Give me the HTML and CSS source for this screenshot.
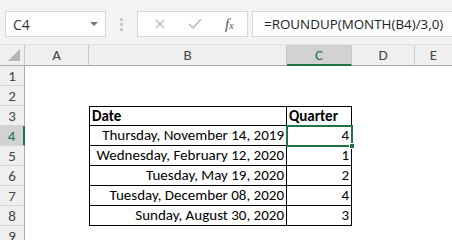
FILE: index.html
```html
<!DOCTYPE html>
<html>
<head>
<meta charset="utf-8">
<link rel="stylesheet" href="styles.css">
</head>
<body>
<div class="topbar">
  <div class="namebox"><span class="name">C4</span><span class="caret"></span></div>
  <div class="dots"><i></i><i></i><i></i></div>
  <div class="fxbox">
    <svg class="ic" width="14" height="14" viewBox="0 0 14 14"><path d="M3 3 L11 11 M11 3 L3 11" stroke="#b8b8b8" stroke-width="1.4" fill="none"/></svg>
    <svg class="ic" width="16" height="14" viewBox="0 0 16 14"><path d="M2 7 L6 11 L14 2" stroke="#b8b8b8" stroke-width="1.4" fill="none"/></svg>
    <span class="fx"><em>f</em><small>x</small></span>
  </div>
  <div class="formula">=ROUNDUP(MONTH(B4)/3,0)</div>
</div>
<div class="sheet">
  <div class="hd corner"><span class="tri"></span></div>
  <div class="hd col">A</div>
  <div class="hd col">B</div>
  <div class="hd col sel">C</div>
  <div class="hd col">D</div>
  <div class="hd col last">E</div>

  <div class="hd row">1</div><div class="c"></div><div class="c"></div><div class="c"></div><div class="c"></div><div class="c"></div>
  <div class="hd row">2</div><div class="c"></div><div class="c"></div><div class="c"></div><div class="c"></div><div class="c"></div>
  <div class="hd row">3</div><div class="c"></div><div class="c t l top b">Date</div><div class="c t top b">Quarter</div><div class="c"></div><div class="c"></div>
  <div class="hd row rsel">4</div><div class="c"></div><div class="c t l r">Thursday, November 14, 2019</div><div class="c t r active">4<span class="handle"></span></div><div class="c"></div><div class="c"></div>
  <div class="hd row">5</div><div class="c"></div><div class="c t l r">Wednesday, February 12, 2020</div><div class="c t r">1</div><div class="c"></div><div class="c"></div>
  <div class="hd row">6</div><div class="c"></div><div class="c t l r">Tuesday, May 19, 2020</div><div class="c t r">2</div><div class="c"></div><div class="c"></div>
  <div class="hd row">7</div><div class="c"></div><div class="c t l r">Tuesday, December 08, 2020</div><div class="c t r">4</div><div class="c"></div><div class="c"></div>
  <div class="hd row">8</div><div class="c"></div><div class="c t l r">Sunday, August 30, 2020</div><div class="c t r">3</div><div class="c"></div><div class="c"></div>
  <div class="hd row">9</div><div class="c"></div><div class="c"></div><div class="c"></div><div class="c"></div><div class="c"></div>
</div>
</body>
</html>
```
FILE: styles.css
```css
* { box-sizing: border-box; }
html, body { margin: 0; padding: 0; }
body {
  width: 452px; height: 240px; overflow: hidden;
  background: #ffffff;
  font-family: "Segoe UI", "Open Sans", "Noto Sans", sans-serif;
}
.topbar {
  height: 45px;
  background: #f3f3f3;
  display: flex;
  align-items: flex-start;
  padding-top: 11px;
  padding-left: 5px;
  border-bottom: 1px solid #e1e1e1;
}
.namebox {
  width: 101px; height: 26px;
  background: #fff;
  border: 1px solid #d6d6d6;
  display: flex; align-items: center; justify-content: space-between;
  padding: 0 6px 0 7px;
  font-size: 14px; color: #333;
}
.caret {
  width: 0; height: 0;
  border-left: 4px solid transparent; border-right: 4px solid transparent;
  border-top: 4px solid #777;
  margin-right: 1px;
}
.dots {
  width: 31px; height: 26px;
  display: flex; flex-direction: column; align-items: center; justify-content: center; gap: 2px;
}
.dots i { display: block; width: 3px; height: 3px; background: #c6c6c6; border-radius: 1px; }
.fxbox {
  width: 111px; height: 26px;
  background: #fff; border: 1px solid #d6d6d6;
  display: flex; align-items: center;
  padding-left: 15px; gap: 20px;
}
.ic { display: block; }
.fx { font-family: "Liberation Serif", serif; color: #555; font-size: 15px; margin-left: 2px; }
.fx em { font-style: italic; }
.fx small { font-size: 10px; font-style: italic; }
.formula {
  margin-left: 4px;
  flex: 1; height: 26px;
  background: #fff; border: 1px solid #d6d6d6; border-right: none;
  padding-left: 11px;
  font-size: 13.4px; line-height: 24px; color: #222;
  white-space: nowrap;
}
.sheet {
  display: grid;
  grid-template-columns: 25px 64px 198px 65px 63px 1fr;
  grid-template-rows: 21px repeat(9, 20px);
  font-family: "Carlito", "Lato", "Liberation Sans", sans-serif;
  font-size: 15px;
  color: #000;
}
.hd {
  background: #efefef;
  color: #444;
  display: flex; align-items: center; justify-content: center;
  font-family: "Carlito", "Lato", "Liberation Sans", sans-serif;
  font-size: 15px;
}
.col { border-right: 1px solid #c8c8c8; border-bottom: 1px solid #ababab; }
.col.last { border-right: none; }
.corner { border-right: 1px solid #c8c8c8; border-bottom: 1px solid #ababab; position: relative; }
.tri {
  position: absolute; right: 4px; bottom: 4px;
  width: 0; height: 0;
  border-left: 12px solid transparent;
  border-bottom: 12px solid #b5b5b5;
}
.row { border-right: 1px solid #ababab; border-bottom: 1px solid #d4d4d4; }
.sel { background: #d2d2d2; color: #217346; border-bottom: 2px solid #217346; }
.rsel { background: #d2d2d2; color: #217346; border-right: 2px solid #217346; }
.c { position: relative; white-space: nowrap; padding: 0 2px; line-height: 19px; }
.t { border-right: 1px solid #000; border-bottom: 1px solid #000; }
.t.l { border-left: 1px solid #000; }
.top { border-top: 1px solid #000; line-height: 18px; }
.b { font-weight: bold; }
.r { text-align: right; }
.active { outline: 2px solid #217346; outline-offset: -1px; z-index: 2; }
.handle {
  position: absolute; right: -4px; bottom: -4px;
  width: 6px; height: 6px;
  background: #217346; border: 1px solid #fff;
}
```
